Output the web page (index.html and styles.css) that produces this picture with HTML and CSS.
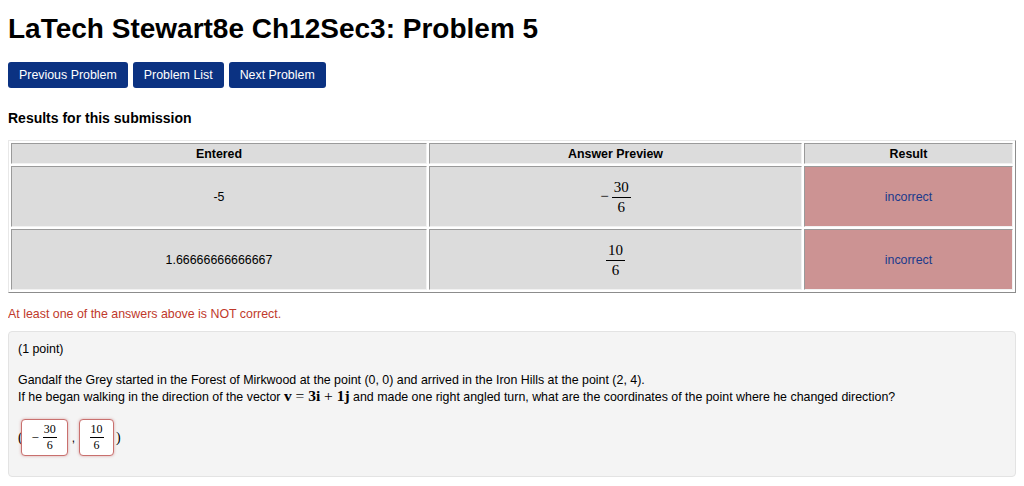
FILE: index.html
```html
<!DOCTYPE html>
<html>
<head>
<meta charset="utf-8">
<link rel="stylesheet" href="styles.css">
</head>
<body>
<h1 class="title">LaTech Stewart8e Ch12Sec3: Problem 5</h1>
<div class="nav">
  <a class="btn">Previous Problem</a>
  <a class="btn">Problem List</a>
  <a class="btn">Next Problem</a>
</div>
<h3 class="results-heading">Results for this submission</h3>
<table class="results">
  <tr>
    <th class="c1">Entered</th>
    <th class="c2">Answer Preview</th>
    <th class="c3">Result</th>
  </tr>
  <tr class="row">
    <td>-5</td>
    <td><span class="math"><span class="minus">&minus;</span><span class="frac"><span class="num">30</span><span class="den">6</span></span></span></td>
    <td class="bad">incorrect</td>
  </tr>
  <tr class="row">
    <td>1.66666666666667</td>
    <td><span class="math"><span class="frac"><span class="num">10</span><span class="den">6</span></span></span></td>
    <td class="bad">incorrect</td>
  </tr>
</table>
<div class="warning">At least one of the answers above is NOT correct.</div>
<div class="well">
  <p class="points">(1 point)</p>
  <p class="statement">Gandalf the Grey started in the Forest of Mirkwood at the point (0, 0) and arrived in the Iron Hills at the point (2, 4).<br>
  If he began walking in the direction of the vector <span class="bm">v</span><span class="bmop"> = </span><span class="bm">3i</span><span class="bmop"> + </span><span class="bm">1j</span> and made one right angled turn, what are the coordinates of the point where he changed direction?</p>
  <div class="answer">
    <span class="paren">(</span><span class="ans a1"><span class="minus sm">&minus;</span><span class="frac small"><span class="num">30</span><span class="den">6</span></span></span><span class="comma">,</span><span class="ans a2"><span class="frac small"><span class="num">10</span><span class="den">6</span></span></span><span class="paren">)</span>
  </div>
</div>
</body>
</html>
```
FILE: styles.css
```css
body {
  margin: 8px;
  font-family: "Liberation Sans", Arial, Helvetica, sans-serif;
  font-size: 12.4px;
  color: #000;
  background: #fff;
}
.title {
  font-size: 28px;
  font-weight: bold;
  margin: 5px 0 0 0;
  line-height: 32px;
}
.nav {
  display: flex;
  gap: 5px;
  margin-top: 17px;
}
.btn {
  display: block;
  background: #0b3282;
  color: #fff;
  font-size: 12.4px;
  line-height: 26px;
  height: 26px;
  padding: 0 11px;
  border-radius: 3px;
}
.results-heading {
  font-size: 14px;
  font-weight: bold;
  margin: 22px 0 0 0;
  line-height: 16px;
}
.results {
  width: 100%;
  margin-top: 14px;
  border-collapse: separate;
  border-spacing: 2px;
  border: 1px solid;
  border-color: #e8e8e8 #8c8c8c #8c8c8c #e8e8e8;
}
.results th, .results td {
  background: #dcdcdc;
  border: 1px solid;
  border-color: #9a9a9a #f2f2f2 #f2f2f2 #9a9a9a;
  text-align: center;
  padding: 0;
  font-size: 12.4px;
}
.results th {
  height: 19px;
  font-weight: bold;
}
.c1 { width: 414px; }
.c2 { width: 371px; }
.results .row td { height: 59px; }
.results td.bad {
  background: #cc9393;
  color: #1a3a8c;
}
.math {
  display: inline-flex;
  align-items: center;
  font-family: "Liberation Serif", "Times New Roman", serif;
  font-size: 15px;
}
.minus {
  font-family: "Liberation Serif", "Times New Roman", serif;
  font-size: 15px;
  margin-right: 3px;
}
.frac {
  display: inline-flex;
  flex-direction: column;
  align-items: center;
  font-family: "Liberation Serif", "Times New Roman", serif;
  font-size: 15px;
  line-height: 16px;
}
.frac .num {
  border-bottom: 1px solid #000;
  padding: 0 2px 2px;
}
.frac .den {
  padding-top: 1px;
}
.warning {
  color: #c0392b;
  font-size: 12.4px;
  margin-top: 14px;
  line-height: 14px;
}
.well {
  margin-top: 10px;
  background: #f4f4f4;
  border: 1px solid #e3e3e3;
  border-radius: 4px;
  padding: 9px 9px 20px;
}
.points {
  margin: 0;
  line-height: 17px;
}
.statement {
  margin: 14px 0 0 0;
  line-height: 17px;
}
.bm {
  font-family: "Liberation Serif", "Times New Roman", serif;
  font-weight: bold;
  font-size: 15.5px;
  line-height: 12px;
}
.bmop {
  font-family: "Liberation Serif", "Times New Roman", serif;
  font-size: 15.5px;
  line-height: 12px;
  white-space: pre;
}
.answer {
  display: flex;
  align-items: center;
  margin-top: 13px;
}
.ans {
  display: inline-flex;
  align-items: center;
  justify-content: center;
  background: #fff;
  border: 1px solid #c9706e;
  box-shadow: 0 0 3px rgba(185, 74, 72, 0.45);
  border-radius: 4px;
  height: 37px;
  box-sizing: border-box;
}
.a1 { width: 47px; margin-left: -2px; }
.a2 { width: 35px; }
.minus.sm { font-size: 13px; margin-right: 4px; }
.frac.small {
  font-size: 12px;
  line-height: 13px;
}
.frac.small .num { padding: 0 1px 1px; }
.paren {
  font-family: "Liberation Serif", "Times New Roman", serif;
  font-size: 14px;
}
.comma {
  margin: 0 4px;
  font-size: 12px;
}
.answer .paren:last-child { margin-left: 2px; }
```
